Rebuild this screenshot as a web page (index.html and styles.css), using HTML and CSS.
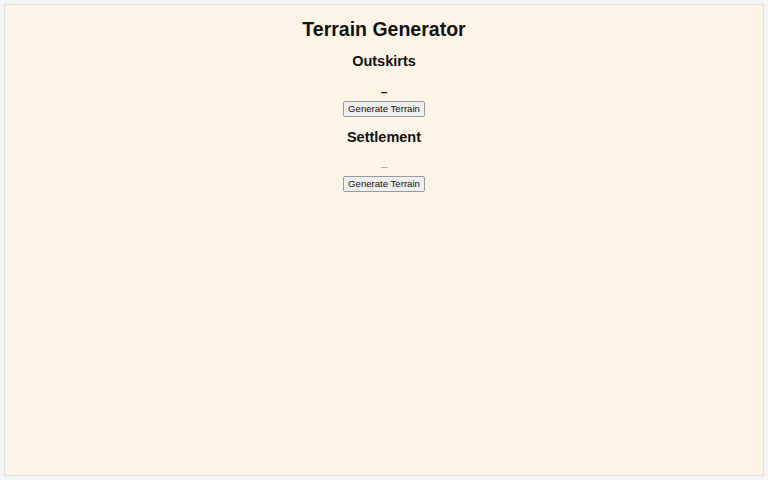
FILE: index.html
```html
<!DOCTYPE html>
<html lang="en">
<head>
    <meta charset="UTF-8">
    <meta name="viewport" content="width=device-width, initial-scale=1.0">
    <title>Terrain Generator</title>
    <link rel="stylesheet" href="styles.css">
</head>
<body>
    <div class="page">
        <h1>Terrain Generator</h1>

        <section class="generator">
            <h2>Outskirts</h2>
            <p class="result">–</p>
            <button class="generate">Generate Terrain</button>
        </section>

        <section class="generator">
            <h2>Settlement</h2>
            <p class="result empty">–</p>
            <button class="generate">Generate Terrain</button>
        </section>
    </div>
</body>
</html>
```

FILE: styles.css
```css
body {
    font-family: "Liberation Sans", Arial, sans-serif;
    background: #f4f4f4;
    color: #111111;
    margin: 0;
    padding: 4px;
    height: 100vh;
    box-sizing: border-box;
}

.page {
    height: 100%;
    box-sizing: border-box;
    background: #fcf4e6;
    border: 1px solid #dddddd;
    text-align: center;
    padding-top: 13px;
}

h1 {
    font-size: 19.5px;
    line-height: 22px;
    margin: 0 0 13px;
}

.generator {
    display: flex;
    flex-direction: column;
    align-items: center;
    margin-bottom: 12px;
}

h2 {
    font-size: 14.5px;
    line-height: 17px;
    margin: 0 0 15px;
}

.result {
    font-size: 12px;
    line-height: 14px;
    font-weight: bold;
    margin: 0 0 2px;
}

.result.empty {
    font-weight: normal;
    color: #aaaaaa;
    margin-top: -1px;
}

.generate {
    font-family: "Liberation Sans", Arial, sans-serif;
    font-size: 9.6px;
    line-height: 11px;
    padding: 1px 4px 2px;
    background: #efefef;
    border: 1px solid #9a9a9a;
    border-radius: 2px;
    color: #111111;
}
```
